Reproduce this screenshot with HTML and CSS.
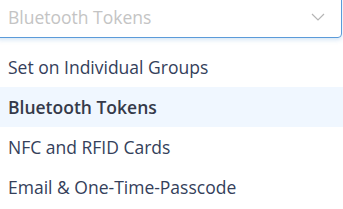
FILE: index.html
```html
<!DOCTYPE html>
<html>
<head>
<meta charset="utf-8">
<link rel="stylesheet" href="styles.css">
</head>
<body>
<div class="select">
  <span class="placeholder">Bluetooth Tokens</span>
  <svg class="chevron" width="14" height="8" viewBox="0 0 14 8"><path d="M1 1 L7 7 L13 1" fill="none" stroke="#b5b5b5" stroke-width="1.2"/></svg>
</div>
<ul class="menu">
  <li class="item">Set on Individual Groups</li>
  <li class="item active">Bluetooth Tokens</li>
  <li class="item">NFC and RFID Cards</li>
  <li class="item">Email &amp; One-Time-Passcode</li>
</ul>
</body>
</html>
```
FILE: styles.css
```css
html, body {
  margin: 0;
  padding: 0;
  background: #fff;
  width: 343px;
  height: 209px;
  overflow: hidden;
  font-family: "Open Sans", "Noto Sans", sans-serif;
}
.select {
  box-sizing: border-box;
  margin: -4px 1px 0 -4px;
  height: 42px;
  border: 1px solid #5b9bd9;
  border-radius: 4px;
  box-shadow: 0 2px 4px rgba(91, 155, 217, 0.25);
  display: flex;
  align-items: center;
  justify-content: space-between;
  padding: 0 16px 0 11px;
}
.placeholder {
  font-size: 17.5px;
  color: #c4c4c4;
}
.chevron {
  display: block;
}
.menu {
  list-style: none;
  margin: 9px 0 0;
  padding: 0;
}
.item {
  height: 40px;
  display: flex;
  align-items: center;
  padding-left: 8px;
  font-size: 17.5px;
  color: #34405a;
}
.item.active {
  background: #f0f7ff;
  font-weight: 600;
  color: #353a4a;
}
```
